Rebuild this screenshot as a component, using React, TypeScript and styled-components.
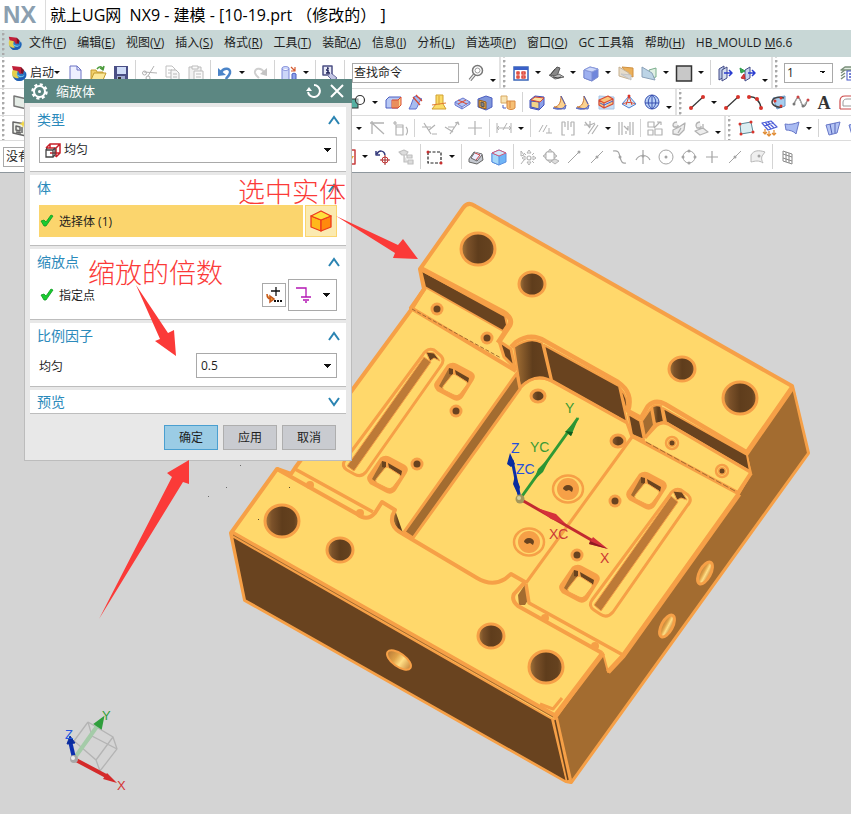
import React from 'react';
import styled, { createGlobalStyle } from 'styled-components';

const uiFont = '"Open Sans", "Noto Sans CJK SC", sans-serif';

const GlobalStyle = createGlobalStyle`
  * { box-sizing: border-box; }
  body { margin: 0; background: #d4d4d4; font-family: ${uiFont}; font-size: 12px; color: #1e1e1e; }
  button, input, select { font: inherit; color: inherit; margin: 0; }
`;

const Shell = styled.div`
  position: relative;
  display: flex;
  flex-direction: column;
  min-height: 100vh;
  overflow: hidden;
`;

const TitleBar = styled.header`
  display: flex;
  align-items: center;
  height: 30px;
  background: #fff;
`;

const Brand = styled.div`
  flex: none;
  width: 46px;
  padding-left: 3px;
  border-right: 1px solid #dcdcdc;
  font: bold 24px/30px "Liberation Sans", sans-serif;
  color: #8b9fb0;
`;

const Title = styled.h1`
  margin: 0;
  padding-left: 4px;
  font-size: 16px;
  line-height: 30px;
  font-weight: normal;
  color: #000;
  white-space: pre;
`;

const MenuBar = styled.nav`
  display: flex;
  align-items: center;
  height: 27px;
  padding-bottom: 2px;
  background: #c8d7d6;
  white-space: nowrap;
  overflow: hidden;
`;

const MenuItem = styled.button`
  flex: none;
  margin-right: 11px;
  padding: 0;
  border: 0;
  background: none;
  line-height: 24px;
`;

const MenuLead = styled.div`
  display: flex;
  align-items: center;
  height: 25px;
  width: 29px;
  flex: none;
  & > svg { flex: none; }
`;

const Bar = styled.div<{ $h: number; $last?: boolean }>`
  display: flex;
  align-items: center;
  height: ${p => p.$h}px;
  background: #fff;
  border-bottom: 1px solid ${p => (p.$last ? '#8e979d' : '#dcdcdc')};
  overflow: hidden;
  & > * { flex: none; }
`;

const Grip = styled.span<{ $edge?: boolean }>`
  align-self: stretch;
  width: ${p => (p.$edge ? 10 : 7)}px;
  border-left: ${p => (p.$edge ? '2px solid #e2e2e2' : '0')};
  background:
    radial-gradient(circle at 1px 1px, #a9a9a9 1px, transparent 2px) 2px 3px / 9px 5px repeat-y;
`;

const Sep = styled.span`
  align-self: stretch;
  width: 6px;
  margin: 3px 0;
  background: linear-gradient(#d4d4d4, #d4d4d4) 3px 0 / 1px 100% no-repeat;
`;

const Tool = styled.button`
  display: grid;
  place-items: center;
  width: 23px;
  height: 23px;
  padding: 0;
  border: 0;
  background: none;
`;

const Drop = styled.button<{ $low?: boolean }>`
  display: grid;
  place-items: center;
  width: 12px;
  height: 16px;
  padding: 0;
  border: 0;
  background: none;
  align-self: ${p => (p.$low ? 'flex-end' : 'center')};
  &::after {
    content: '';
    border: solid transparent;
    border-width: 3px 3px 0;
    border-top-color: #111;
  }
`;

const Covered = styled.span<{ $w: number }>`
  width: ${p => p.$w}px;
`;

const StartLabel = styled.span`
  width: 21px;
  margin-top: -2px;
  white-space: nowrap;
`;

const FindBox = styled.input`
  width: 107px;
  height: 20px;
  margin: 0 5px;
  padding: 0 1px 1px;
  border: 1px solid #a9a9a9;
  background: #fff;
`;

const SmallSelect = styled.select<{ $w: number }>`
  appearance: none;
  width: ${p => p.$w}px;
  height: 20px;
  margin: 0 3px;
  padding: 0 2px;
  border: 1px solid #a9a9a9;
  border-radius: 0;
  background:
    linear-gradient(to top right, transparent 50%, #111 50%) right 9px center / 3px 3px no-repeat,
    linear-gradient(to top left, transparent 50%, #111 50%) right 6px center / 3px 3px no-repeat,
    #fff;
`;

const Viewport = styled.main`
  flex: 1;
  display: flex;
  background: #d4d4d4;
  & > svg { display: block; width: 100%; flex: 1; }
`;

const Dialog = styled.section`
  position: absolute;
  left: 24px;
  top: 79px;
  width: 328px;
  border: 1px solid #bcbcbc;
  border-top: 0;
  background: #e8e8e8;
`;

const DialogHead = styled.header`
  display: flex;
  align-items: center;
  gap: 8px;
  height: 24px;
  margin: 0 -1px;
  padding: 0 8px 0 7px;
  background: #5c8782;
  color: #fff;
`;

const DialogTitle = styled.h2`
  flex: 1;
  margin: 0;
  padding-bottom: 1px;
  font-size: 13px;
  font-weight: normal;
`;

const HeadButton = styled.button`
  display: grid;
  place-items: center;
  width: 15px;
  height: 20px;
  padding: 0;
  border: 0;
  background: none;
`;

const Panels = styled.div`
  display: flex;
  flex-direction: column;
  gap: 3px;
  padding: 4px 5px 0;
`;

const Panel = styled.section<{ $closed?: boolean }>`
  display: flex;
  flex-direction: column;
  background: #fff;
  border-bottom: 1px solid #bdbdbd;
  padding-bottom: ${p => (p.$closed ? 0 : 8)}px;
`;

const PanelHead = styled.button<{ $closed?: boolean }>`
  display: flex;
  align-items: center;
  justify-content: space-between;
  height: ${p => (p.$closed ? 23 : 26)}px;
  margin-bottom: ${p => (p.$closed ? 0 : 4)}px;
  padding: 0 6px 0 7px;
  border: 0;
  background: none;
  font-size: 14px;
  line-height: 20px;
  color: #2b8abb;
`;

const Field = styled.div<{ $h: number }>`
  display: flex;
  align-items: center;
  gap: 2px;
  height: ${p => p.$h}px;
  margin: 0 9px;
`;

const FieldLabel = styled.label`
  flex: 1;
`;

const Picked = styled.div<{ $on?: boolean }>`
  flex: 1;
  align-self: stretch;
  display: flex;
  align-items: center;
  gap: 5px;
  padding: 0 0 1px 1px;
  background: ${p => (p.$on ? '#fbd56d' : 'transparent')};
`;

const CubeButton = styled.button`
  display: grid;
  place-items: center;
  width: 32px;
  height: 32px;
  padding: 0;
  border: 1px solid #fbd56d;
  background: #fbeab0;
`;

const PointButton = styled.button`
  display: grid;
  place-items: center;
  width: 24px;
  height: 24px;
  padding: 0;
  border: 1px solid #a9a9a9;
  background: #fff;
`;

const Combo = styled.div<{ $w?: number }>`
  display: flex;
  align-items: center;
  gap: 2px;
  align-self: stretch;
  width: ${p => (p.$w ? `${p.$w}px` : '100%')};
  padding-left: 4px;
  border: 1px solid #a9a9a9;
  background: #fff;
`;

const ComboSelect = styled.select`
  appearance: none;
  flex: 1;
  min-width: 0;
  height: 22px;
  padding: 0 0 1px;
  border: 0;
  background:
    linear-gradient(to top right, transparent 50%, #111 50%) right 9px center / 4px 4px no-repeat,
    linear-gradient(to top left, transparent 50%, #111 50%) right 5px center / 4px 4px no-repeat;
`;

const Footer = styled.footer`
  display: flex;
  justify-content: flex-end;
  gap: 5px;
  padding: 11px 15px 10px;
`;

const ActionButton = styled.button<{ $primary?: boolean }>`
  width: 54px;
  height: 25px;
  padding: 0 0 1px;
  border: 1px solid ${p => (p.$primary ? '#4a9fd0' : '#aeaeae')};
  background: ${p => (p.$primary ? '#9bcce5' : '#c9cbd0')};
`;

const Notes = styled.svg`
  position: absolute;
  left: 0;
  top: 0;
  pointer-events: none;
`;

/* ---------- icons, all on an 18 x 18 grid ---------- */

const G = '#b2b2b2';
const L = (d: string, c = G, w = 1, f = 'none') => <path d={d} stroke={c} strokeWidth={w} fill={f} strokeLinejoin="round" />;
const D = (x: number, y: number, c = '#d8342c', r = 2) => <circle cx={x} cy={y} r={r} fill={c} />;

const icons: Record<string, React.ReactNode> = {
  globe: <>
    <ellipse cx="9.500" cy="11" rx="7" ry="6" fill="#2a78c4" />
    <path d="M2 9c0-4 3-5 6-5l-1 7 3 5c-5 1-8-3-8-7z" fill="#e4cf4a" />
    <path d="M3 12c3 4 9 3 13-4 1 6-3 9-7 9-3 0-5-2-6-5z" fill="#1f5eb4" />
    <path d="M6 9c3 4 7 4 9 1-1 4-7 5-9-1z" fill="#7ad0e8" />
    <path d="M2 2l9 1 2 6-3 1-2-3-5-1z" fill="#c01f38" />
    <path d="M11 3l3 3-1 4-2-1z" fill="#7d1226" />
  </>,
  fresh: <>{L('M4 2h7l4 4v11H4z', '#6a73c4', 1, '#eef0ff')}{L('M11 2v4h4', '#6a73c4')}</>,
  open: <>{L('M2 16V6h5l1 2h6v8z', '#c49b2e', 1, '#f0cf6a')}{L('M2 16l3-7h12l-3 7z', '#c49b2e', 1, '#fbe89a')}{L('M8 5c2-3 5-3 6 0M11 4l3 2 1-4', '#4a9a3a', 1.5)}</>,
  save: <><path d="M2 2h14v15H3l-1-1z" fill="#4a4f86" /><path d="M5 3h9v7H5z" fill="#cfdcf8" /><path d="M5 12h8v5H5z" fill="#9ea9d0" /><path d="M6 13h3v4H6z" fill="#333" /></>,
  cut: <>{L('M13 2L7 12M3 8l13 1')}<circle cx="3.500" cy="9" r="2" fill="none" stroke={G} /><circle cx="7" cy="14" r="2" fill="none" stroke={G} /></>,
  copy: <>{L('M2 2h6l3 3v8H2zM4 6h4M4 9h4', '#c0c0c0')}{L('M7 6h5l3 3v7H7zM9 10h4M9 13h4', '#b8b8b8', 1, '#f6f6f6')}</>,
  paste: <>{L('M2 3h12v13H2z', '#bcbcbc', 1, '#f1f1f1')}{L('M5 2h6v3H5zM7 7h9v10H7zM9 10h5M9 13h5', '#bcbcbc', 1, '#fafafa')}</>,
  undo: <>{L('M5 8c3-5 10-4 9 1-1 3-3 4-4 6', '#4b84c8', 2.5)}<path d="M2 4v8l8-1z" fill="#4b84c8" /></>,
  redo: <>{L('M13 8c-3-5-10-4-9 1 1 3 3 4 4 5', '#cfcfcf', 2)}<path d="M16 4v8l-7-2z" fill="#c4c4c4" /></>,
  parts: <>{L('M2 4c1-2 6-2 7 0v11c-1 2-6 2-7 0zM2 5c2 2 5 2 7 0', '#7a86d8', 1, '#ccd6f8')}{L('M12 10c1-1 3-1 4 0v5c-1 1-3 1-4 0z', '#4c5fc0', 1, '#8ea2ea')}{L('M11 3l4 4M15 3v4h-4', '#d65a30', 1.2)}</>,
  info: <>{L('M2 2h9v9H2z', '#4b4f84', 1.500, '#e8eaf7')}{L('M6 4h1v1M5 6h2v3M5 9h4', '#1c2058', 1.5)}{L('M10 9l6 5-4 3-5-5', '#666a9c', 1, '#c3c6e4')}</>,
  search: <>{L('M8 10l-5 6', '#777', 3.5)}{L('M8 10l-5 6', '#f0f0f0', 1.2)}<circle cx="10.500" cy="6.500" r="5" fill="#fff" stroke="#777" strokeWidth="1.500" /><circle cx="10.500" cy="6.500" r="2.500" fill="none" stroke="#999" /></>,
  grid: <><rect x="2" y="3" width="14" height="13" fill="#fff" stroke="#3a66b8" strokeWidth="1.500" /><path d="M2 3h14v3H2z" fill="#3a60c8" />{L('M5 8h2v2H5zM10 8h3v2h-3zM5 12h2v2H5zM10 12h3v2h-3z', '#e0483a', 1.5)}</>,
  layer: <>{L('M3 11l7-8 3 1-3 8z', '#555', 1, '#888')}{L('M2 11l6 4 9-2-5-3-5 2z', '#666', 1, '#b8b8b8')}{L('M4 10l4-5M6 13l5 1 3-1', '#444')}</>,
  cube: <>{L('M2 6l6-3 8 2v8l-6 4-8-3z', '#7a8ad0', 1, '#6f86dc')}{L('M2 6l8 2v9l-8-3z', '#7a8ad0', 1, '#9db0f0')}{L('M2 6l6-3 8 2-6 3z', '#8a9adc', 1, '#cdd8fa')}</>,
  wallA: <>{L('M5 3l11 1v9l-5-2z', '#d09040', 1, '#ebb05a')}{L('M2 3l10 6v6L2 12z', '#c7b190', 1, '#e6dccb')}{L('M4 10l10 1v5z', '#c4c4c4', 1, '#d6d6d6')}</>,
  wallB: <>{L('M9 6l7-2v9l-5 1z', '#7aae8c', 1, '#e0f0e4')}{L('M2 3l10 6 3 7-13-3z', '#8aa0b8', 1, '#bcd4e6')}</>,
  swatch: <rect x="1.500" y="2" width="15" height="15" fill="#c8c8c8" stroke="#333" strokeWidth="1.500" />,
  section: <>{L('M3 5l5-3v11l-5 3z', '#444c88', 1, '#b8c6e4')}{L('M6 6l5-3v11l-5 3z', '#444c88', 1, '#d4deee')}{L('M8 9h8M13 6l3 3-3 3', '#2a3cd0', 1.5)}</>,
  sectionX: <>{L('M6 6l5-3v11l-5 3z', '#444c88', 1, '#c8d4ee')}{L('M9 9h7M13 6l3 3-3 3', '#2a3cd0', 1.5)}{L('M1 4l5 3-4 2z', '#2a9a48', 1, '#36ae50')}{L('M2 14l3-4 1 5z', '#c42c2c', 1, '#d83c3c')}</>,
  layers: <>{L('M2 6l4-3h10l-4 3zM2 9l4-3M2 12l4-3M2 15l4-3', '#7a8f7a', 1.500, '#e2ece0')}<rect x="8" y="7" width="9" height="9" fill="#fff" stroke="#4456c8" />{L('M10 10h2M14 10h1M10 13h2M14 13h1', '#4456c8', 1.5)}</>,
  plane: <>{L('M4 3l13 3v10L4 13z', '#777', 1.500, '#e4ece6')}</>,
  sketchG: <>{L('M3 3l13 2v12L3 14zM6 7l4 1v4l-4-1zM12 8v6M6 13l5 1', '#666', 1.500, '#eef0ea')}<path d="M13 1l1 3 3 1-3 1-1 3-1-3-3-1 3-1z" fill="#f2d848" /></>,
  unite: <><rect x="0" y="6" width="9" height="9" fill="#56b0a2" stroke="#333" /><circle cx="11" cy="7" r="4.500" fill="#fff" fillOpacity=".5" stroke="#333" strokeWidth="1.200" /></>,
  extr: <>{L('M2 7l3-3h12l-3 3v8H2z', '#4c5fc0', 1, '#b7c8f4')}{L('M8 7h6v8H8zM14 7l3-3v8l-3 3M10 7v8M12 7v8', '#d94a32', 1, '#f9d488')}</>,
  blend: <>{L('M2 16c3-5 3-9 6-13l7 3c-4 3-3 6-6 10z', '#5c6fd0', 1, '#a8bcf0')}{L('M6 4l7 8M9 2l6 6', '#d94a32', 1.2)}</>,
  boot: <>{L('M6 2h7v9l3 5H2l4-5z', '#d0a030', 1, '#fbdc68')}{L('M2 12l14-2', '#e07a32', 1.2)}{L('M9 3v9', '#d8a030')}</>,
  slab: <>{L('M2 9l8-4 7 4-8 5zM2 9v3l7 4v-2M9 16l8-5V9', '#6878d0', 1, '#b4c4f2')}{L('M5 7l9 4M5 11l8-4', '#d94a32', 1)}</>,
  shell: <>{L('M2 6l8-3 6 2v9l-6 3-8-3z', '#4c5fc0', 1, '#7f96dc')}{L('M3 7l7 2v7l-7-2z', '#94601c', 1, '#e8a44a')}{L('M5 9l3 1v4l-3-1z', '#555', 1, '#888')}</>,
  pair: <>{L('M2 3h6v7H2z', '#d8a860', 1, '#f8e4b4')}{L('M8 8h8v7c-2 2-6 2-8 0zM11 8v7', '#d88840', 1, '#f6bf74')}{L('M4 12v3h3', '#4c5fc0')}</>,
  boxR: <>{L('M2 7l5-4 9 1v8l-5 5-9-2z', '#4050b8', 1, '#8ca0e8')}{L('M3 8l8 1v7l-8-2z', '#4050b8', 1, '#f2d488')}{L('M3 7l4-3 9 1-4 4z', '#d94a32', 1, '#fbe0a0')}</>,
  surf: <>{L('M3 14c5 0 7-5 7-11l4 8c1 2-2 5-4 5z', '#cc7a30', 1, '#fbd290')}{L('M2 15c4 2 10 2 13-3l-1 4z', '#5868c0', 1, '#a0b0e8')}{L('M10 3l4 8', '#4c5fc0')}</>,
  thick: <>{L('M2 3l15 1v12H2z', '#a8c4e4', 1, '#c8e0f8')}{L('M2 7l9-4 5 3-9 4zM7 10v5l-5-3V7M7 15l9-4V6', '#d94a32', 1.2, '#fbc57c')}{L('M3 10l4 2 9-4', '#4c5fc0')}</>,
  cone: <>{L('M9 3l7 8-7 4-7-4z', '#4c7fd0', 1, '#d4e8fa')}{L('M9 3L6 12M9 3l3 9M3 11c3-2 9-2 12 0', '#d94a32')}{D(9, 3, '#d8342c', 1.5)}</>,
  ball: <><circle cx="9" cy="9" r="7" fill="#b8d0f6" stroke="#3850b0" />{L('M9 2v14M2 10h14M9 2c-5 4-5 10 0 14M9 2c5 4 5 10 0 14', '#3850b0')}</>,
  line: <>{L('M3 15L15 4', '#333', 1.2)}{D(3, 15)}{D(15, 4)}</>,
  arc: <>{L('M3 4c6-1 11 4 12 11', '#333', 1.5)}{D(3, 4)}{D(11, 6)}{D(15, 15)}</>,
  sweep: <>{L('M4 5l12-2v10l-8 3z', '#6a9ac8', 1, '#a8cdee')}{L('M15 5c-8-2-12 1-12 4s5 6 10 5', '#444', 1.5)}{D(6, 8, '#d8342c', 1.5)}{D(12, 5, '#d8342c', 1.5)}{D(12, 13, '#d8342c', 1.5)}</>,
  spline: <>{L('M2 11c3-8 5-8 7-2s4 6 6-1', '#777', 1.2)}{L('M2 11l4-7 5 9 5-6', '#aaa')}{D(2, 11, '#777', 1.5)}{D(6, 4, '#c44', 1.5)}{D(11, 13, '#777', 1.5)}{D(16, 7, '#c44', 1.5)}</>,
  textA: <text x="9" y="15.500" textAnchor="middle" fontFamily="Liberation Serif, serif" fontWeight="bold" fontSize="18" fill="#333">A</text>,
  offset: <>{L('M2 16V8c0-4 2-5 5-5h10M2 16h15', '#cc4a4a', 1.2)}{L('M5 13V9c0-2 2-3 4-3h8M5 13h12', '#999')}</>,
  trimA: <>{L('M2 4h14M4 2v13M4 4l12 11', G, 1.3)}</>,
  box2: <>{L('M5 8h7v8H5zM5 8v-2h7v2M15 8c2 2 2 6 0 8M2 4h4M4 2v4', G, 1.2)}</>,
  ex1: <>{L('M2 8h9M4 4l7 11M9 11l6-5M12 15h5', G, 1.2)}</>,
  ex2: <>{L('M2 8l8 5M7 15l8-12M5 8h6M12 4l3-1 1 3', G, 1.2)}</>,
  cross1: <>{L('M2 9h14M9 2v14', G, 1.2)}</>,
  dim: <>{L('M2 4v10M16 4v10M2 9h14M4 7L2 9l2 2M14 7l2 2-2 2M8 11l4-7', G, 1)}</>,
  para: <>{L('M3 13l4-7M7 13l4-7M10 14h6M13 9v5', G, 1)}</>,
  mirror: <>{L('M6 3H3v13h3M12 3h3v13h-3M9 2v9M6 3v5M12 3v5', G, 1.2)}</>,
  spark: <>{L('M2 6h6M3 3l5 6M8 2v6M6 15l7-10M10 15l6-9M8 6l5-2', G, 1.2)}</>,
  bars: <>{L('M2 3v13M5 3v13M13 3v13M16 3v13M7 7l4 4v-4M9 12v3', G, 1.2)}</>,
  boxes: <>{L('M2 3h6v5H2zM9 10h7v6H9zM2 11h5v5H2zM8 9l6-6M11 3h4v3', G, 1.2)}</>,
  gears: <>{L('M8 3c-4 0-5 3-3 5h4V6M4 11l6-3 6-4-1 7-5 5-6-1zM9 14l3-5', G, 1.3, '#ededed')}</>,
  stamp: <>{L('M8 3c-4 0-5 4-3 6h4V7M3 12l5 4 8-3-5-4zM11 5v5', G, 1.3, '#ededed')}</>,
  patch: <>{L('M3 5l11-2 2 10-12 2z', '#5c8a98', 1, '#dceef2')}{D(3, 5, '#d8342c', 1.5)}{D(14, 3, '#d8342c', 1.5)}{D(16, 13, '#d8342c', 1.5)}{D(4, 15, '#d8342c', 1.5)}</>,
  mesh: <>{L('M2 4l9-2 6 6-9 3zM5 3l6 7M8 3l6 6M4 7l10-3', '#5060d8', 1.2)}{L('M5 10v4M9 12v4M14 11v4M3 13l2 2 2-2M7 15l2 2 2-2M12 14l2 2 2-2', '#e08a30', 1.2)}</>,
  ruled: <>{L('M2 5c4 1 10 0 14-2l-3 12c-2-3-7-4-10-4z', '#6878c8', 1, '#a9bbf2')}</>,
  ruled2: <>{L('M2 6l14-3-3 11-8 2z', '#6878c8', 1, '#b4c4f4')}{L('M6 5l2 10M11 4v10', '#5464b8')}</>,
  filterR: <>{L('M1 2h15v14H1z', '#c83c3c', 1.5)}<path d="M9 8h6l-2 3v3h-2v-3z" fill="#e8a83a" /></>,
  orient: <>{L('M3 6c2-4 7-4 8 1M2 3v4h4', '#343a7c', 1.5)}<circle cx="11" cy="12" r="3" fill="none" stroke="#c83030" />{L('M11 7v10M6 12h10', '#a02828')}</>,
  tree: <>{L('M2 4l5-2 4 2-2 3H5zM10 7h5v3h-5zM11 12h5v4h-5zM7 7v7h4', '#c0c0c0', 1.2, '#dcdcdc')}</>,
  marquee: <><rect x="2" y="4" width="13" height="11" fill="none" stroke="#222" strokeDasharray="3 1.500" strokeWidth="1.200" />{D(2, 4, '#c83030', 1.5)}{D(15, 15, '#c83030', 1.5)}</>,
  solidG: <>{L('M2 11l5-7 8 2 1 6-6 4-8-2z', '#666', 1, '#c4c8d0')}{L('M8 4l-4 6 6 3 5-6', '#666', 1, '#eef')}{L('M8 5l5 2-4 5', '#c84040')}</>,
  solidB: <>{L('M2 5l7-3 7 3v9l-7 3-7-3z', '#5a90e0', 1, '#6fb4f6')}{L('M2 5l7 3v9l-7-3z', '#5a90e0', 1, '#a4d8fa')}{L('M2 5l7-3 7 3-7 3z', '#d05a7a', 1, '#cfe8fc')}</>,
  snap1: <><circle cx="10" cy="10" r="2" fill="none" stroke={G} strokeWidth="1.200" />{L('M2 3l3 4-3 1zM2 16l3-4M10 2l2 3H8zM17 10l-3 2V8zM10 17l-2-3h4zM3 10l3-2v4zM5 5l2 2M13 13l2 2M15 5l-2 2', G, 1)}</>,
  snap2: <><circle cx="8" cy="8" r="5" fill="none" stroke={G} strokeWidth="1.200" />{L('M8 1l2 3H6zM8 15l-2-3h4zM1 8l3-2v4zM15 8l-3 2V6z', G, 1, '#ddd')}{L('M9 13l4-2 4 2-4 3z', G, 1, '#ddd')}</>,
  seg: <>{L('M3 15L14 4', '#a4a4a4', 1)}{D(14, 4, '#a4a4a4', 1.5)}</>,
  mid: <>{L('M3 15L15 3', '#a4a4a4', 1)}{D(9, 9, '#a4a4a4', 1.500)}</>,
  curve: <>{L('M2 3c6-1 6 2 7 6s2 7 6 6', '#a4a4a4', 1.2)}{D(9, 9, '#a4a4a4', 1.5)}</>,
  inter: <>{L('M9 2v14M2 12c3-6 11-6 14 0', '#a4a4a4', 1.2)}{D(9, 8, '#a4a4a4', 1.5)}</>,
  centre: <><circle cx="9" cy="9" r="7" fill="none" stroke="#a4a4a4" />{D(9, 9, '#a4a4a4', 1.5)}</>,
  quad: <><circle cx="9" cy="9" r="6" fill="none" stroke="#a4a4a4" />{D(9, 3, '#a4a4a4', 1.5)}{D(9, 15, '#a4a4a4', 1.5)}{D(3, 9, '#a4a4a4', 1.5)}{D(15, 9, '#a4a4a4', 1.5)}</>,
  plus: <>{L('M9 3v12M3 9h12', '#a4a4a4', 1.2)}</>,
  face: <>{L('M2 7c3-5 8-5 14-3l-3 4c-1 3 0 5 1 7-4-3-8-2-12-1z', '#b8b8b8', 1, '#efefef')}{D(10, 8, '#a4a4a4', 1.5)}</>,
  table: <>{L('M5 3l9 3v10l-9-3zM8 4v10M11 5v10M5 6l9 3M5 10l9 3', '#8a8a8a')}</>,
};

const Icon = ({ name, size = 18 }: { name: string; size?: number }) => (
  <svg width={size} height={size} viewBox="0 0 18 18" fill="none" aria-hidden="true">{icons[name]}</svg>
);

/* '|' separator, 'v' drop arrow, '..' overflow arrow, '#' new group */
const Tools = ({ items }: { items: string }) => (
  <>
    {items.split(' ').map((t, i) => {
      if (t === '|') return <Sep key={i} />;
      if (t === '#') return <Grip key={i} $edge />;
      if (t === 'v') return <Drop key={i} aria-label="展开" />;
      if (t === '..') return <Drop key={i} $low aria-label="更多" />;
      return <Tool key={i} aria-label={t}><Icon name={t} /></Tool>;
    })}
  </>
);

const menus: [string, string, string][] = [
  ['文件(', 'F', ')'], ['编辑(', 'E', ')'], ['视图(', 'V', ')'], ['插入(', 'S', ')'], ['格式(', 'R', ')'],
  ['工具(', 'T', ')'], ['装配(', 'A', ')'], ['信息(', 'I', ')'], ['分析(', 'L', ')'], ['首选项(', 'P', ')'],
  ['窗口(', 'O', ')'], ['GC 工具箱', '', ''], ['帮助(', 'H', ')'], ['HB_MOULD ', 'M', '6.6'],
];

/* ---------- model drawing ---------- */

const edge = '#f6a047';
const face = '#ffd86b';
const dark = '#69431f';
const side = '#a36c30';

const Hole = ({ x, y, r }: { x: number; y: number; r: number }) => (
  <ellipse cx={x} cy={y} rx={r - 1} ry={r - 2} fill="url(#bore)" stroke={edge} strokeWidth={3} />
);

const Pin = ({ x, y }: { x: number; y: number }) => (
  <g>
    <circle cx={x} cy={y} r="6.500" fill={edge} />
    <circle cx={x} cy={y} r="3.500" fill={dark} />
  </g>
);

const LedgePin = ({ x, y }: { x: number; y: number }) => (
  <g>
    <circle cx={x} cy={y} r="6" fill={face} stroke={edge} strokeWidth="2.500" />
    <circle cx={x} cy={y} r="4" fill={edge} />
    <circle cx={x} cy={y} r="2.500" fill={dark} />
  </g>
);

const Bore = ({ x, y }: { x: number; y: number }) => (
  <g>
    <ellipse cx={x} cy={y} rx="15" ry="13.500" fill={face} stroke={edge} strokeWidth="2.500" />
    <circle cx={x} cy={y} r="11" fill={edge} />
    <path d={`M${x - 5} ${y}a5 4 0 0 1 10 0l-1 3-3-2-3 1z`} fill={dark} />
  </g>
);

const Pocket = ({ x, y }: { x: number; y: number }) => (
  <g transform={`translate(${x} ${y})`}>
    <path d="M-6 -16Q-2 -19 2 -17L17 -9Q21 -6 18 -2L8 14Q4 19 -1 16L-16 8Q-20 4 -17 0Z" fill={edge} stroke={edge} strokeWidth="3" />
    <path d="M-5 -14L-1 -7-11 7-15 4Z" fill={side} />
    <path d="M-5 -14L-1 -13V-7L-5 -8Z" fill={dark} />
    <path d="M1 -12L15 -4 14 1 2 -7Z" fill={dark} />
    <path d="M-2 -7Q0 -9 2 -7L13 0Q14 2 12 4L6 12Q3 15 0 13L-10 8Q-13 6 -10 3Z" fill={face} stroke={edge} strokeWidth="1" />
  </g>
);

const Model = () => (
  <g strokeLinejoin="round">
    <path d="M420 269L463 208Q468 201 475 206L792 386 808 453 571 782 566 781 245 600 231 533 277 469 291 474 295 468 411 310 424 289Z" fill={face} stroke={edge} strokeWidth="4" />
    <path d="M232 536L552 719 567 782 245 600Z" fill={dark} stroke={edge} strokeWidth="2" />
    <path d="M556 718L603 653 608 672 623 656 739 494 751 473 746 453 793 388 808 453 571 782Z" fill={side} stroke={edge} strokeWidth="2" />
    <path d="M232 533L555 716 603 653M608 672L623 656 739 494M746 454L792 388" fill="none" stroke={edge} strokeWidth="5" />
    <path d="M233 535L553 717" stroke={side} strokeWidth="1" />
    <path d="M555 718L569 780" stroke={edge} strokeWidth="6" /><path d="M555 720L568 780" stroke={dark} strokeWidth="1.500" />
    <path d="M540 704L553 709 562 698" fill="none" stroke={edge} strokeWidth="3" />

    {/* rear left ledge */}
    <path d="M421 270L425 287 503 331 507 325 505 316Z" fill={dark} stroke={edge} strokeWidth="2" />
    <path d="M420 268L503 312Q513 318 510 325L498 343" fill="none" stroke={edge} strokeWidth="5" />
    <path d="M425 288L411 308 516 371" fill="none" stroke={edge} strokeWidth="4" />
    <path d="M412 309L501 358" stroke={side} strokeWidth="1" strokeDasharray="4 2" />
    <path d="M499 341L504 357 515 368 511 349Z" fill={dark} stroke={edge} strokeWidth="3" />

    {/* centre pocket */}
    <path d="M514 347Q530 336 542 343L551 381Q533 374 520 387Z" fill="url(#fillet)" stroke={edge} strokeWidth="2" />
    <path d="M544 345L619 386 627 422 552 380Z" fill={dark} stroke={edge} strokeWidth="2" />
    <path d="M620 388Q630 399 626 410Z" fill={dark} stroke={edge} strokeWidth="2" />
    <path d="M511 347L516 342Q531 332 545 341L618 382Q634 393 628 411L641 418 648 406Q655 399 665 404L746 452" fill="none" stroke={edge} strokeWidth="4.500" />
    <path d="M628 414L640 421 644 440 632 435Z" fill={dark} stroke={edge} strokeWidth="2" />
    <path d="M642 421L651 408 654 425 645 437Z" fill={side} stroke={edge} strokeWidth="2" />
    <path d="M652 407Q655 404 661 406L664 422 655 424Z" fill="url(#fillet)" stroke={edge} strokeWidth="2" />
    <path d="M663 408L747 455 750 471 666 422Z" fill={dark} stroke={edge} strokeWidth="2" />
    <path d="M645 438L656 426Q661 421 668 424L750 472" fill="none" stroke={edge} strokeWidth="3" />
    <path d="M632 436L738 493 751 473" fill="none" stroke={edge} strokeWidth="4" />
    <path d="M646 442L735 491" stroke={side} strokeWidth="1" strokeDasharray="6 2" />
    <path d="M517 373L520 389 413 538 404 532Z" fill={side} stroke={edge} strokeWidth="3" />
    <path d="M520 388Q536 371 553 382L627 423 632 437 526 583" fill="none" stroke={edge} strokeWidth="3" />

    {/* front rim */}
    <path d="M526 583L518 595 519 605 525 605 528 600Z" fill={side} />
    <path d="M395 510Q390 525 403 533Z" fill="url(#fillet)" />
    <path d="M277 469L357 514Q367 522 375 513L382 502 395 510Q386 525 403 534L477 578Q492 587 505 579L511 574 525 582 514 594Q511 600 518 606L602 653" fill="none" stroke={edge} strokeWidth="4" />
    <path d="M295 469L373 512M526 584L529 603 623 655" fill="none" stroke={edge} strokeWidth="3.500" />
    <g fill={edge}><circle cx="310" cy="485" r="4" /><circle cx="360" cy="513" r="4" /><circle cx="545" cy="618" r="4" /><circle cx="595" cy="646" r="4" /></g>

    {/* slots */}
    <path d="M422 356Q427 347 434 350L440 355Q446 360 440 367L366 472Q361 478 354 474L347 470Q341 466 345 460Z" fill={face} stroke={edge} strokeWidth="3" />
    <path d="M424 357L431 362 354 471 347 466Z" fill="#bd7a37" stroke={edge} strokeWidth="1" />
    <path d="M426 352L434 353 440 361 434 358 430 361Z" fill={dark} stroke={edge} strokeWidth="1" />
    <path d="M669 496Q674 487 681 490L688 495Q693 500 687 506L613 612Q607 619 600 614L594 610Q588 606 592 600Z" fill={face} stroke={edge} strokeWidth="3" />
    <path d="M671 496L678 502 601 611 594 605Z" fill="#bd7a37" stroke={edge} strokeWidth="1" />
    <path d="M673 491L682 492 687 500 681 498 677 500Z" fill={dark} stroke={edge} strokeWidth="1" />

    <Pocket x={454} y={382} /><Pocket x={387} y={475} /><Pocket x={646} y={491} /><Pocket x={579} y={584} />
    <Hole x={478} y={249} r={18} /><Hole x={532} y={284} r={14} /><Hole x={682} y={369} r={14} /><Hole x={740} y={398} r={18} />
    <Hole x={282} y={521} r={18} /><Hole x={340} y={550} r={14} /><Hole x={491} y={636} r={14} /><Hole x={546} y={667} r={18} />
    <Hole x={538} y={396} r={8} /><Hole x={618} y={441} r={8} />
    <Pin x={456} y={411} /><Pin x={417} y={464} /><Pin x={615} y={501} /><Pin x={577} y={555} />
    <Pin x={437} y={309} /><Pin x={487} y={338} /><LedgePin x={672} y={443} /><LedgePin x={722} y={471} />
    <Bore x={568} y={489} /><Bore x={529} y={542} />
    <ellipse cx="399" cy="660" rx="14" ry="6.500" transform="rotate(36 399 660)" fill="url(#port)" stroke={edge} strokeWidth="2" />
    <ellipse cx="705" cy="573" rx="5.500" ry="12" transform="rotate(28 705 573)" fill="url(#port)" stroke={edge} strokeWidth="3" />
    <ellipse cx="667" cy="626" rx="5.500" ry="12" transform="rotate(28 667 626)" fill="url(#port)" stroke={edge} strokeWidth="3" />
  </g>
);

const Axes = () => (
  <g fontFamily="Liberation Sans, Arial, sans-serif" fontSize="14">
    <path d="M520 499L578 418" stroke="#2f9a35" strokeWidth="3" />
    <path d="M579 417L565 432 571 436ZM551 456L538 469 534 480 543 472Z" fill="#2c9433" />
    <path d="M565 431L571 436 573 432Z" fill="#125c1c" />
    <path d="M520 499L512 460" stroke="#0b2fa8" strokeWidth="3" />
    <path d="M510 453L507 464 511 467 515 464ZM515 475L513 484 518 495 520 487Z" fill="#0a2c9e" />
    <path d="M520 499L600 545" stroke="#c22a30" strokeWidth="3" />
    <path d="M608 549L593 537 589 544ZM537 508L551 519 566 524 556 514Z" fill="#d5323a" />
    <path d="M608 549L589 544 590 541Z" fill="#8f1a22" />
    <circle cx="520" cy="499" r="4.500" fill="#a5975a" /><circle cx="519" cy="498" r="2" fill="#d8d09a" />
    <g fill="#2450dc"><text x="511" y="453">Z</text><text x="516" y="474">ZC</text></g>
    <g fill="#3a9a34"><text x="565" y="413">Y</text><text x="530" y="452">YC</text></g>
    <g fill="#cc3a34"><text x="549" y="539">XC</text><text x="600" y="563">X</text></g>
  </g>
);

const Triad = () => (
  <g fontFamily="Liberation Sans, Arial, sans-serif" fontSize="13">
    <path d="M88 722L113 737 117 749 100 771 74 759M88 722L74 741 96 760 100 771M113 737L96 760M88 722L92 736 117 749M92 736L74 759" fill="none" stroke="#b4b4b4" strokeWidth="1.300" />
    <path d="M76 756L98 725" stroke="#a4cba8" strokeWidth="4" />
    <path d="M103 718L95 724 101 728Z" fill="#2f9e3c" stroke="#2f9e3c" strokeWidth="2" />
    <path d="M74 758L70 741" stroke="#0c2fae" strokeWidth="4" />
    <path d="M70 736L67 744 75 743Z" fill="#0a2c9e" stroke="#0a2c9e" strokeWidth="1" />
    <path d="M76 760L108 777" stroke="#d42a2a" strokeWidth="4" />
    <path d="M117 783L107 773 103 779Z" fill="#d42a2a" />
    <circle cx="74" cy="759" r="4" fill="#a8a8a8" /><circle cx="73" cy="758" r="2" fill="#eee" />
    <text x="65" y="739" fill="#2456e0">Z</text>
    <text x="102" y="720" fill="#35a03c">Y</text>
    <text x="117" y="790" fill="#d43434">X</text>
  </g>
);

const Scene = () => (
  <svg viewBox="0 173 851 641" preserveAspectRatio="xMinYMin meet" role="img" aria-label="10-19.prt">
    <defs>
      <linearGradient id="bore"><stop offset="0" stopColor="#a8783a" /><stop offset=".2" stopColor="#7c522a" /><stop offset=".5" stopColor="#5f3d1c" /><stop offset=".85" stopColor="#65421f" /><stop offset="1" stopColor="#83582c" /></linearGradient>
      <linearGradient id="fillet"><stop offset="0" stopColor="#a87336" /><stop offset=".5" stopColor="#5f3d1c" /><stop offset="1" stopColor="#69431f" /></linearGradient>
      <linearGradient id="port"><stop offset="0" stopColor="#b77a38" /><stop offset=".35" stopColor="#e0a248" /><stop offset=".6" stopColor="#ffdf86" /><stop offset="1" stopColor="#c8863c" /></linearGradient>
    </defs>
    <g fill="#6c6c6c"><rect x="208" y="496" width="1" height="1" /><rect x="240" y="465" width="1" height="1" /><rect x="226" y="487" width="1" height="1" /></g>
    <Model />
    <g fill="#5a4a2a"><rect x="289" y="487" width="1" height="1" /><rect x="258" y="519" width="1" height="1" /></g>
    <Axes />
    <Triad />
  </svg>
);

const Chevron = ({ down }: { down?: boolean }) => (
  <svg width="12" height="10" viewBox="0 0 12 10" aria-hidden="true">
    <path d={down ? 'M1 1L6 8 11 1' : 'M1 9L6 2 11 9'} fill="none" stroke="#2b84b2" strokeWidth="2" />
  </svg>
);

const Check = () => (
  <svg width="14" height="13" viewBox="0 0 14 13" aria-hidden="true">
    <path d="M1 7l3-1 2 2 5-7 2 1-7 10H4z" fill="#19cc30" stroke="#0c9a20" strokeWidth=".8" />
  </svg>
);

export default function App() {
  return (
    <Shell>
      <GlobalStyle />
      <TitleBar>
        <Brand>NX</Brand>
        <Title>{'就上UG网  NX9 - 建模 - [10-19.prt （修改的） ]'}</Title>
      </TitleBar>
      <MenuBar>
        <MenuLead><Grip /><Icon name="globe" size={16} /></MenuLead>
        {menus.map(([a, key, b]) => (
          <MenuItem key={a}>{a}{key && <u>{key}</u>}{b}</MenuItem>
        ))}
      </MenuBar>
      <Bar $h={32}>
        <Grip />
        <Tools items="globe" />
        <StartLabel>启动</StartLabel>
        <Tools items="v fresh open save | cut copy paste | undo v redo | parts v | info |" />
        <FindBox aria-label="查找命令" defaultValue="查找命令" />
        <Tools items="search .. # grid v layer v cube v wallA wallB v swatch v | section sectionX .. #" />
        <SmallSelect $w={49} aria-label="图层"><option>1</option></SmallSelect>
        <Tools items="layers" />
      </Bar>
      <Bar $h={27}>
        <Grip />
        <Tools items="plane" />
        <Covered $w={316} />
        <Tools items="unite v extr blend boot slab shell pair | boxR surf surf thick cone ball .. # line v line arc sweep spline textA offset" />
      </Bar>
      <Bar $h={25}>
        <Grip />
        <Tools items="sketchG" />
        <Covered $w={323} />
        <Tools items="v trimA box2 | ex1 ex2 cross1 | dim v | para mirror spark v bars | boxes gears stamp .. # patch mesh ruled v | ruled2 ruled2" />
      </Bar>
      <Bar $h={32} $last>
        <SmallSelect $w={130} aria-label="选择过滤器"><option>没有选择过滤器</option></SmallSelect>
        <Covered $w={200} />
        <Tools items="filterR v orient tree | marquee v | solidG solidB | snap1 snap2 seg mid curve inter centre quad plus mid face | table" />
      </Bar>
      <Viewport><Scene /></Viewport>

      <Dialog aria-label="缩放体">
        <DialogHead>
          <svg width="17" height="17" viewBox="0 0 17 17" aria-hidden="true">
            <circle cx="8.500" cy="8.500" r="7" fill="none" stroke="#fff" strokeWidth="2.500" strokeDasharray="3 2.500" />
            <circle cx="8.500" cy="8.500" r="5.500" fill="none" stroke="#fff" strokeWidth="2" />
            <circle cx="8.500" cy="8.500" r="1.500" fill="#fff" />
          </svg>
          <DialogTitle>缩放体</DialogTitle>
          <HeadButton aria-label="重置">
            <svg width="16" height="16" viewBox="0 0 16 16"><path d="M8 2a6 6 0 1 1-6 7" fill="none" stroke="#fff" strokeWidth="2" /><path d="M0 8l3-4 3 4z" fill="#fff" /></svg>
          </HeadButton>
          <HeadButton aria-label="关闭">
            <svg width="14" height="14" viewBox="0 0 14 14"><path d="M1 1l12 12M13 1L1 13" stroke="#fff" strokeWidth="2" /></svg>
          </HeadButton>
        </DialogHead>
        <Panels>
          <Panel>
            <PanelHead>类型<Chevron /></PanelHead>
            <Field $h={26}>
              <Combo>
                <svg width="18" height="16" viewBox="0 0 18 16" fill="none" aria-hidden="true">
                  <path d="M2 6l4-4h10v9l-4 4M6 2v4M16 2l-4 4M6 11h10M2 6h10v9" stroke="#c8202a" strokeWidth="1.500" />
                  <path d="M2 8h7v7H2zM2 8l1-2M9 8l2-2M11 6v7l-2 2" stroke="#444" strokeWidth="1.300" />
                </svg>
                <ComboSelect aria-label="类型"><option>均匀</option></ComboSelect>
              </Combo>
            </Field>
          </Panel>
          <Panel>
            <PanelHead>体<Chevron /></PanelHead>
            <Field $h={32}>
              <Picked $on><Check />选择体 (1)</Picked>
              <CubeButton aria-label="选择体">
                <svg width="24" height="24" viewBox="0 0 24 24" stroke="#ee3a1c" strokeWidth="1.300" strokeLinejoin="round">
                  <path d="M2 7l10 4v11L2 18z" fill="#ffb81c" /><path d="M22 7l-10 4v11l10-4z" fill="#ff8a0c" /><path d="M2 7l10-5 10 5-10 4z" fill="#ffe03c" />
                </svg>
              </CubeButton>
            </Field>
          </Panel>
          <Panel>
            <PanelHead>缩放点<Chevron /></PanelHead>
            <Field $h={32}>
              <Picked><Check />指定点</Picked>
              <PointButton aria-label="点对话框">
                <svg width="18" height="18" viewBox="0 0 18 18" fill="none">
                  <path d="M11 1v9M6 5h9" stroke="#111" strokeWidth="1.300" />
                  <path d="M2 8c0 4 1 5 4 5M5 10l4 3-4 3z" stroke="#c4561c" strokeWidth="1.500" fill="#f0a030" />
                  <path d="M9 15h2M12 15h2M15 15h2" stroke="#111" strokeWidth="2" />
                </svg>
              </PointButton>
              <Combo $w={49}>
                <svg width="20" height="18" viewBox="0 0 20 18" fill="none" stroke="#b416b4" strokeWidth="1.300" aria-hidden="true">
                  <path d="M3 2h10v9M8 11h10M10 14h6M12 16h2" />
                </svg>
                <ComboSelect aria-label="点类型" />
              </Combo>
            </Field>
          </Panel>
          <Panel>
            <PanelHead>比例因子<Chevron /></PanelHead>
            <Field $h={25}>
              <FieldLabel htmlFor="scale">均匀</FieldLabel>
              <Combo $w={141}>
                <ComboSelect id="scale"><option>0.5</option></ComboSelect>
              </Combo>
            </Field>
          </Panel>
          <Panel $closed>
            <PanelHead $closed>预览<Chevron down /></PanelHead>
          </Panel>
        </Panels>
        <Footer>
          <ActionButton $primary>确定</ActionButton>
          <ActionButton>应用</ActionButton>
          <ActionButton>取消</ActionButton>
        </Footer>
      </Dialog>

      <Notes width="851" height="814" viewBox="0 0 851 814" fill="#fb3a38">
        <g fontFamily='"Noto Sans CJK SC", sans-serif' fontWeight="300" fontSize="27">
          <text x="238" y="202">选中实体</text>
          <text x="88" y="283">缩放的倍数</text>
        </g>
        <path d="M336 216L398 245 403 239 418 259 393 258 395 253Z" />
        <path d="M136 285L168 333 174 330 176 356 155 341 160 339Z" />
        <path d="M99 619L172 477 167 473 189 460 189 484 183 482Z" />
      </Notes>
    </Shell>
  );
}
